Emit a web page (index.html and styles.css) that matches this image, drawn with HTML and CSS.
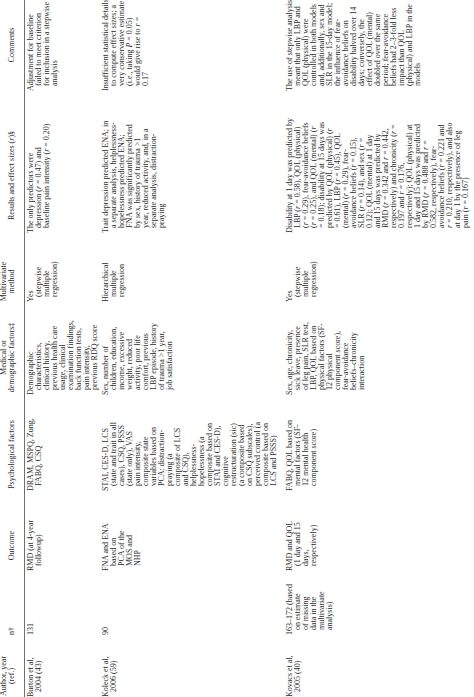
FILE: index.html
```html
<!DOCTYPE html>
<html lang="en">
<head>
<meta charset="utf-8">
<title>Table</title>
<link rel="stylesheet" href="styles.css">
</head>
<body>
<div class="viewport">
  <div class="page">
    <table class="tbl">
      <colgroup>
        <col class="w1"><col class="w2"><col class="w3"><col class="w4">
        <col class="w5"><col class="w6"><col class="w7"><col class="w8">
      </colgroup>
      <thead>
        <tr>
          <th class="g1">Author, year<br>(ref.)</th>
          <th class="g2">n†</th>
          <th class="g3">Outcome</th>
          <th class="g4">Psychological factors</th>
          <th class="g5">Medical or<br>demographic factors‡</th>
          <th class="g6">Multivariate<br>method</th>
          <th class="g7">Results and effect sizes (<i>r</i>)§</th>
          <th class="g8">Comments</th>
        </tr>
      </thead>
      <tbody>
        <tr class="r1">
          <td>Burton et al,<br>2004 (43)</td>
          <td>131</td>
          <td>RMD (at 4-year<br>followup)</td>
          <td>DRAM, MSPQ, Zung,<br>FABQ, CSQ</td>
          <td>Demographic<br>characteristics,<br>clinical history,<br>previous health care<br>usage, clinical<br>examination findings,<br>back function tests,<br>pain intensity,<br>previous RDQ score</td>
          <td>Yes<br>(stepwise<br>multiple<br>regression)</td>
          <td>The only predictors were<br>depression (<i>r</i> = 0.47) and<br>baseline pain intensity (<i>r</i> = 0.20)</td>
          <td>Adjustment for baseline<br>failed to meet criterion<br>for inclusion in a stepwise<br>analysis</td>
        </tr>
        <tr class="r2">
          <td>Koleck et al,<br>2006 (59)</td>
          <td>90</td>
          <td>FNA and ENA<br>based on<br>PCA of the<br>MOS and<br>NHP</td>
          <td>STAI, CES-D, LCS<br>(state and trait in all<br>cases), CSQ, PSSS<br>(state only), VAS<br>pain intensity,<br>composite state<br>variables based on<br>PCA: distraction-<br>praying (a<br>composite of LCS<br>and CSQ),<br>helplessness-<br>hopelessness (a<br>composite based on<br>STAI and CES-D),<br>cognitive<br>restructuration (sic)<br>(a composite based<br>on CSQ subscales),<br>perceived control (a<br>composite based on<br>LCS and PSSS)</td>
          <td>Sex, number of<br>children, education,<br>income, excessive<br>weight, reduced<br>activity, poor life<br>comfort, previous<br>LBP episode, history<br>of trauma &gt;1 year,<br>job satisfaction</td>
          <td>Hierarchical<br>multiple<br>regression</td>
          <td>Trait depression predicted ENA; in<br>a separate analysis, helplessness-<br>hopelessness predicted ENA;<br>FNA was significantly predicted<br>by sex, history of trauma &gt;1<br>year, reduced activity, and, in a<br>separate analysis, distraction-<br>praying</td>
          <td>Insufficient statistical details<br>to compute effect sizes; a<br>very conservative estimate<br>(i.e., taking <i>P</i> = 0.05)<br>would give rise to <i>r</i> =<br>0.17</td>
        </tr>
        <tr class="r3">
          <td>Kovacs et al,<br>2005 (40)</td>
          <td>163–172 (based<br>on estimate<br>of missing<br>data in the<br>multivariate<br>analysis)</td>
          <td>RMD and QOL<br>(1 day and 15<br>days,<br>respectively)</td>
          <td>FABQ, QOL based on<br>mental factors (SF-<br>12 mental health<br>component score)</td>
          <td>Sex, age, chronicity,<br>sick leave, presence<br>of leg pain, SLR test,<br>LBP, QOL based on<br>physical factors (SF-<br>12 physical<br>component score),<br>fear-avoidance<br>beliefs–chronicity<br>interaction</td>
          <td>Yes<br>(stepwise<br>multiple<br>regression)</td>
          <td>Disability at 1 day was predicted by<br>LBP (<i>r</i> = 0.58), QOL (physical)<br>(<i>r</i> = 0.29), fear-avoidance beliefs<br>(<i>r</i> = 0.25), and QOL (mental) (<i>r</i><br>= 0.18); disability at 15 days was<br>predicted by QOL (physical) (<i>r</i><br>= 0.61), LBP (<i>r</i> = 0.45), QOL<br>(mental) (<i>r</i> = 0.29), fear-<br>avoidance beliefs (<i>r</i> = 0.15),<br>SLR (<i>r</i> = 0.14), and sex (<i>r</i> =<br>0.12); QOL (mental) at 1 day<br>and 15 days was predicted by<br>RMD (<i>r</i> = 0.342 and <i>r</i> = 0.442,<br>respectively) and chronicity (<i>r</i> =<br>0.197 and <i>r</i> = 0.176,<br>respectively); QOL (physical) at<br>1 day and 15 days was predicted<br>by RMD (<i>r</i> = 0.488 and <i>r</i> =<br>0.582, respectively), fear-<br>avoidance beliefs (<i>r</i> = 0.221 and<br><i>r</i> = 0.210, respectively), and also<br>at day 1 by the presence of leg<br>pain (<i>r</i> = 0.167)</td>
          <td>The use of stepwise analysis<br>meant that only LBP and<br>QOL (physical) were<br>controlled in both models<br>and, additionally, sex and<br>SLR in the 15-day model;<br>the influence of fear-<br>avoidance beliefs on<br>disability halved over 14<br>days; conversely, the<br>effect of QOL (mental)<br>doubled over the same<br>period; fear-avoidance<br>beliefs had 2–3-fold less<br>impact than QOL<br>(physical) and LBP in the<br>models</td>
        </tr>
      </tbody>
    </table>
  </div>
</div>
</body>
</html>
```

FILE: styles.css
```css
html, body {
  margin: 0;
  padding: 0;
  background: #ffffff;
}

.viewport {
  width: 474px;
  height: 697px;
  overflow: hidden;
  background: #ffffff;
}

/* The table is laid out in its natural (landscape) orientation and
   turned a quarter turn counter-clockwise, as on the printed page. */
.page {
  width: 697px;
  height: 474px;
  transform-origin: 0 0;
  transform: translateY(697px) rotate(-90deg);
  font-family: "Liberation Serif", "Times New Roman", serif;
  font-size: 8px;
  line-height: 8px;
  color: #2b2b2b;
}

.tbl {
  border-collapse: collapse;
  table-layout: fixed;
  width: 706px;
}

.w1 { width: 62px; }
.w2 { width: 64px; }
.w3 { width: 80px; }
.w4 { width: 96px; }
.w5 { width: 93px; }
.w6 { width: 69px; }
.w7 { width: 142px; }
.w8 { width: 100px; }

.tbl th {
  font-weight: normal;
  text-align: center;
  vertical-align: bottom;
  white-space: nowrap;
  border-bottom: 1px solid #707070;
}

.tbl th.g2 { text-align: left; }

.tbl th.g1, .tbl th.g2, .tbl th.g3, .tbl th.g4,
.tbl th.g5, .tbl th.g6, .tbl th.g7, .tbl th.g8 {
  padding-top: 0;
  padding-bottom: 8px;
  padding-left: 0;
}

.tbl th.g1 { padding-right: 20px; }
.tbl th.g2 { padding-right: 0; }
.tbl th.g3 { padding-right: 29px; }
.tbl th.g4 { padding-right: 23px; }
.tbl th.g5 { padding-right: 18px; }
.tbl th.g6 { padding-right: 28px; }
.tbl th.g7 { padding-right: 27px; }
.tbl th.g8 { padding-right: 8px; }

.tbl td {
  vertical-align: top;
  text-align: left;
  white-space: nowrap;
  padding: 2px 0 0 5px;
  text-indent: -5px;
}

.r2 td { padding-top: 3px; }
.r3 td { padding-top: 8px; }

i { font-style: italic; }
```
